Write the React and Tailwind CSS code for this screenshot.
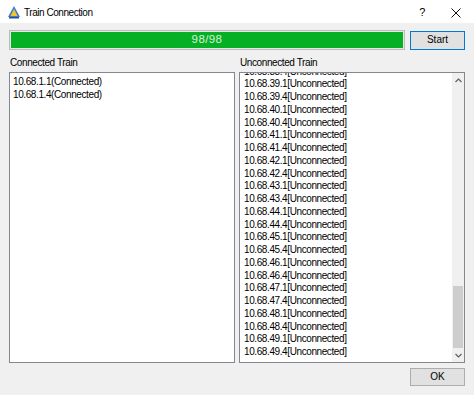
import React from "react";

const font = { fontFamily: '"Liberation Sans", Arial, sans-serif' };

const unconnected = [];
for (let n = 38; n <= 49; n++) {
  unconnected.push(`10.68.${n}.1[Unconnected]`);
  unconnected.push(`10.68.${n}.4[Unconnected]`);
}
// first visible row is 38.4 (clipped)
const visible = unconnected.slice(1);

function TitleIcon() {
  return (
    <svg width="14" height="14" viewBox="0 0 14 14">
      <path d="M7 1 L13 12 L1 12 Z" fill="#3a7bd5" />
      <path d="M7 4 L10.5 11 L3.5 11 Z" fill="#f3c623" />
      <rect x="2" y="12" width="10" height="1.5" fill="#2a4f8a" />
    </svg>
  );
}

export default function App() {
  return (
    <div
      className="w-[474px] h-[395px] bg-[#f0f0f0] flex flex-col text-[10px] tracking-[-0.4px] text-black overflow-hidden"
      style={font}
    >
      {/* title bar */}
      <div className="h-[23px] bg-white flex items-center pl-[7px] shrink-0">
        <TitleIcon />
        <span className="ml-[3px] text-[10px] tracking-[-0.45px] mt-[2px]">Train Connection</span>
        <span className="ml-auto text-[11px] w-[20px] text-center mr-[14px] mt-[2px]">?</span>
        <span className="w-[20px] flex justify-center mr-[8px] mt-[2px]">
          <svg width="10" height="10" viewBox="0 0 10 10">
            <path d="M0.5 0.5 L9.5 9.5 M9.5 0.5 L0.5 9.5" stroke="#111" strokeWidth="1" />
          </svg>
        </span>
      </div>

      <div className="flex flex-col px-[9px] pt-[7px] flex-1 min-h-0">
        {/* progress row */}
        <div className="flex items-center gap-[5px] h-[20px]">
          <div className="flex-1 h-[20px] border border-[#bcbcbc] bg-[#e6e6e6] p-px">
            <div className="h-full w-full bg-[#06b025] flex items-center justify-center text-[#dcefdc] text-[11.5px] tracking-[0.4px] leading-none">
              98/98
            </div>
          </div>
          <button className="w-[55px] h-[19px] border border-[#0078d7] bg-[#e1e1e1] text-[10px] tracking-normal leading-none flex items-center justify-center">
            Start
          </button>
        </div>

        {/* labels + lists */}
        <div className="flex gap-[4px] mt-[3px] flex-1 min-h-0">
          <div className="w-[226px] flex flex-col">
            <div className="h-[19px] flex items-center pl-[1px]">Connected Train</div>
            <div className="h-[291px] border border-[#828790] bg-white pl-[3px] pt-[2px] leading-[13px]">
              <div>10.68.1.1(Connected)</div>
              <div>10.68.1.4(Connected)</div>
            </div>
          </div>
          <div className="flex-1 flex flex-col">
            <div className="h-[19px] flex items-center pl-[1px]">Unconnected Train</div>
            <div className="h-[291px] border border-[#828790] bg-white flex overflow-hidden">
              <div className="flex-1 pl-[4px] leading-[12.75px] mt-[-7.5px] overflow-hidden">
                {visible.map((t) => (
                  <div key={t}>{t}</div>
                ))}
              </div>
              <div className="w-[12px] bg-[#f0f0f0] flex flex-col">
                <div className="h-[14px] flex items-center justify-center">
                  <svg width="7" height="5" viewBox="0 0 7 5">
                    <path d="M0.5 4 L3.5 1 L6.5 4" stroke="#606060" strokeWidth="1.2" fill="none" />
                  </svg>
                </div>
                <div className="flex-1 flex flex-col justify-end">
                  <div className="h-[62px] bg-[#cdcdcd] mx-px"></div>
                </div>
                <div className="h-[14px] flex items-center justify-center">
                  <svg width="7" height="5" viewBox="0 0 7 5">
                    <path d="M0.5 1 L3.5 4 L6.5 1" stroke="#606060" strokeWidth="1.2" fill="none" />
                  </svg>
                </div>
              </div>
            </div>
          </div>
        </div>

        {/* footer */}
        <div className="flex justify-end h-[32px] items-start pt-[5px]">
          <button className="w-[55px] h-[18px] border border-[#adadad] bg-[#e1e1e1] text-[10px] tracking-normal leading-none flex items-center justify-center">
            OK
          </button>
        </div>
      </div>
    </div>
  );
}
